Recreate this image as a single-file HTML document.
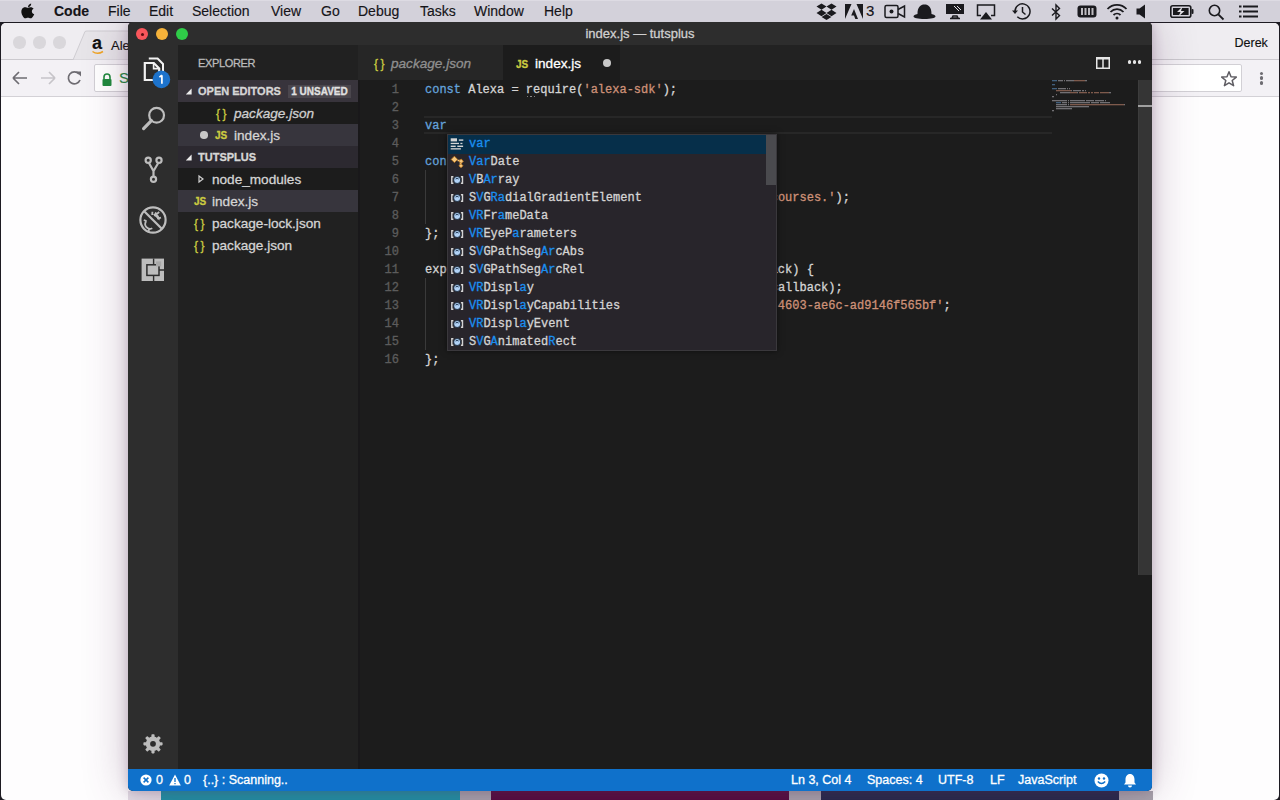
<!DOCTYPE html>
<html><head><meta charset="utf-8">
<style>
*{box-sizing:border-box;margin:0;padding:0}
html,body{width:1280px;height:800px;overflow:hidden;background:#1d1b22;font-family:"Liberation Sans",sans-serif}
.a{position:absolute}
svg{position:absolute;overflow:visible}
#chrome{left:1px;top:23px;width:1277.5px;height:777px;background:#fefdfe;border-radius:5px;overflow:hidden}
#menubar{left:0;top:0;width:1280px;height:22px;background:#d3d1da;z-index:5;border-top:1px solid #dddbe3}
.mi{position:absolute;top:2px;font-size:14px;color:#151418;line-height:16px;white-space:nowrap}
#vsc{left:128px;top:22px;width:1024px;height:769px;background:#1c1c1c;border-radius:5px;overflow:hidden;box-shadow:0 0 12px rgba(90,50,90,.28),0 0 45px rgba(90,50,90,.3)}
.ln{position:absolute;margin-top:0.8px;left:0;width:41px;text-align:right;font-size:12px;line-height:18px;color:#5c5c5c;font-family:"Liberation Mono",monospace}
.code{position:absolute;margin-top:0.5px;left:67px;font-size:12px;line-height:18px;color:#d4d4d4;white-space:pre;font-family:"Liberation Mono",monospace}
.kw{color:#64a2da}.st{color:#ce9178}
.row{position:absolute;left:0;width:180px;height:22px;font-size:13.6px;line-height:22px;color:#cccccc;white-space:nowrap}
.row span{position:absolute;top:0.6px}
.sw{position:absolute;left:0;width:319px;height:18px;font-size:12px;line-height:18px;color:#d4d4d4;white-space:pre;font-family:"Liberation Mono",monospace}
.sw .t{position:absolute;left:21px;top:0}
.h{color:#1b8ff0}
.sb{position:absolute;top:0;height:22px;line-height:22px;font-size:12.5px;color:#fff;white-space:nowrap}
#vsc span,#vsc div{-webkit-text-stroke:0.3px currentColor}
#menubar .mi,#chrome div{-webkit-text-stroke:0.15px currentColor}
</style></head><body>
<svg width="0" height="0" style="position:absolute;left:0;top:0"><defs>
<symbol id="vic" viewBox="0 0 20 18" overflow="visible">
  <path d="M5.4 5.7 H3.8 V12.3 H5.4 M12.9 5.7 H14.5 V12.3 H12.9" fill="none" stroke="#d4d4d4" stroke-width="1.4"/>
  <circle cx="9.15" cy="9" r="3.5" fill="#b2d2f6" stroke="#0e1e30" stroke-width="0.8"/>
  <path d="M7.6 8 Q9.1 6.8 10.6 8" fill="none" stroke="#1d3550" stroke-width="1"/>
</symbol>
</defs></svg>

<!-- ================= CHROME (behind) ================= -->
<div id="chrome" class="a">
  <div class="a" style="left:0;top:0;width:1278px;height:37px;background:#efedf1;border-bottom:1px solid #cbc9ce"></div>
  <div class="a" style="left:12px;top:13px;width:12.5px;height:12.5px;border-radius:50%;background:#d9d7db"></div>
  <div class="a" style="left:32px;top:13px;width:12.5px;height:12.5px;border-radius:50%;background:#d9d7db"></div>
  <div class="a" style="left:52px;top:13px;width:12.5px;height:12.5px;border-radius:50%;background:#d9d7db"></div>
  <svg style="left:0;top:0" width="200" height="37"><path d="M72 37 L84 8.5 Q85 8 86 8 L200 8 L200 37 Z" fill="#e7e5e9" stroke="#cfcdd2" stroke-width="1"/></svg>
  <div class="a" style="left:91px;top:10px;font-size:18px;font-weight:bold;color:#111;line-height:20px">a</div>
  <svg style="left:90px;top:27px" width="14" height="7"><path d="M1.5 1.5 Q6.5 5 12 1.5" fill="none" stroke="#f0a526" stroke-width="1.5"/></svg>
  <div class="a" style="left:110px;top:15px;font-size:13px;color:#111;line-height:15px">Alexa Skills</div>
  <div class="a" style="left:1233.5px;top:13px;font-size:12.5px;color:#111;line-height:15px">Derek</div>

  <div class="a" style="left:0;top:37px;width:1278px;height:37px;background:#f3f1f5;border-bottom:1px solid #d3d1d6"></div>
  <svg style="left:0;top:36px" width="100" height="37">
    <path d="M12 19 H26 M12 19 L18 13 M12 19 L18 25" fill="none" stroke="#6e6c72" stroke-width="1.7"/>
    <path d="M40 19 H54 M54 19 L48 13 M54 19 L48 25" fill="none" stroke="#c6c4c9" stroke-width="1.7"/>
    <path d="M78 15 A6 6 0 1 0 79 21" fill="none" stroke="#6e6c72" stroke-width="1.7"/>
    <path d="M75 12.5 L80 12.5 L80 17.5 Z" fill="#6e6c72"/>
  </svg>
  <div class="a" style="left:92.5px;top:41px;width:1148.5px;height:28px;background:#fff;border:1px solid #d2d0d5;border-radius:2px"></div>
  <svg style="left:99px;top:48.5px" width="14" height="16">
    <path d="M4 7 V5 A3 3 0 0 1 10 5 V7" fill="none" stroke="#1e8a3c" stroke-width="1.6"/>
    <rect x="2.5" y="7" width="9" height="7" rx="1" fill="#1e8a3c"/>
  </svg>
  <div class="a" style="left:118px;top:46px;font-size:15px;color:#1e8a3c;line-height:17px">Secure</div>
  <svg style="left:1217.5px;top:46px" width="20" height="20"><path d="M10 2.8 L12 7.8 L17.3 8.1 L13.2 11.5 L14.6 16.7 L10 13.8 L5.4 16.7 L6.8 11.5 L2.7 8.1 L8 7.8 Z" fill="none" stroke="#5f5d63" stroke-width="1.5" stroke-linejoin="round"/></svg>
  <div class="a" style="left:1258.5px;top:48.5px;width:3.5px;height:3.5px;border-radius:50%;background:#6e6c72"></div>
  <div class="a" style="left:1258.5px;top:53.3px;width:3.5px;height:3.5px;border-radius:50%;background:#6e6c72"></div>
  <div class="a" style="left:1258.5px;top:58.3px;width:3.5px;height:3.5px;border-radius:50%;background:#6e6c72"></div>
  <!-- page cards at bottom -->
  <div class="a" style="left:127px;top:768px;width:33px;height:12px;background:#e4dee6"></div>
  <div class="a" style="left:160px;top:768px;width:299px;height:12px;background:#1d93a6"></div>
  <div class="a" style="left:459px;top:768px;width:31px;height:12px;background:#a9a5ad"></div>
  <div class="a" style="left:490px;top:768px;width:298px;height:12px;background:#540a3d"></div>
  <div class="a" style="left:788px;top:768px;width:32px;height:12px;background:#a9a5ad"></div>
  <div class="a" style="left:820px;top:768px;width:298px;height:12px;background:#24284a"></div>
  <div class="a" style="left:1118px;top:768px;width:34px;height:12px;background:#a9a5ad"></div>
</div>

<!-- ================= MENU BAR ================= -->
<div id="menubar" class="a">
  <svg style="left:20.5px;top:1.5px" width="14.5" height="15.5" viewBox="0 0 16 17"><path d="M11.2 0.5 C11.3 1.6 10.9 2.6 10.3 3.3 C9.7 4.1 8.7 4.6 7.8 4.5 C7.7 3.5 8.2 2.5 8.8 1.8 C9.4 1.1 10.4 0.6 11.2 0.5 Z M14.6 12.3 C14.2 13.2 14 13.6 13.4 14.5 C12.7 15.6 11.7 16.9 10.5 16.9 C9.4 16.9 9.1 16.2 7.7 16.2 C6.2 16.2 5.9 16.9 4.8 16.9 C3.6 16.9 2.7 15.7 2 14.6 C0.1 11.7 -0.1 8.3 1.1 6.5 C1.9 5.2 3.2 4.5 4.5 4.5 C5.8 4.5 6.6 5.2 7.7 5.2 C8.7 5.2 9.3 4.5 10.8 4.5 C11.9 4.5 13.1 5.1 13.9 6.1 C11.1 7.7 11.5 11.6 14.6 12.3 Z" fill="#111"/></svg>
  <div class="mi" style="left:54px;font-weight:bold">Code</div>
  <div class="mi" style="left:108px">File</div>
  <div class="mi" style="left:149px">Edit</div>
  <div class="mi" style="left:192px">Selection</div>
  <div class="mi" style="left:271px">View</div>
  <div class="mi" style="left:321px">Go</div>
  <div class="mi" style="left:358px">Debug</div>
  <div class="mi" style="left:420px">Tasks</div>
  <div class="mi" style="left:474px">Window</div>
  <div class="mi" style="left:544px">Help</div>
  <!-- status icons -->
  <svg style="left:816px;top:2px" width="21" height="17" viewBox="0 0 21 17" fill="#1a1a1e">
    <path d="M5.5 0.5 L10.5 3.6 L5.5 6.8 L0.5 3.6 Z M15.5 0.5 L20.5 3.6 L15.5 6.8 L10.5 3.6 Z M5.5 6.8 L10.5 10 L5.5 13.2 L0.5 10 Z M15.5 6.8 L20.5 10 L15.5 13.2 L10.5 10 Z M5.6 14 L10.5 11 L15.4 14 L10.5 17 Z"/>
  </svg>
  <svg style="left:845px;top:3px" width="18" height="15" viewBox="0 0 18 15" fill="#1a1a1e">
    <path d="M0 0 H6.5 L0 15 Z M11.5 0 H18 V15 Z M9 5 L13 15 H10.3 L9 11.6 H6.2 L9 5 Z"/>
  </svg>
  <div class="mi" style="left:866px;top:2px;font-size:15px">3</div>
  <svg style="left:884px;top:3px" width="22" height="15" viewBox="0 0 22 15">
    <rect x="1" y="1.5" width="13" height="12" rx="1.5" fill="none" stroke="#1a1a1e" stroke-width="1.5"/>
    <circle cx="7.5" cy="7.5" r="2" fill="#1a1a1e"/>
    <path d="M14 5.5 L20.5 2 V13 L14 9.5" fill="none" stroke="#1a1a1e" stroke-width="1.5"/>
  </svg>
  <svg style="left:913px;top:3px" width="23" height="15" viewBox="0 0 23 15" fill="#1a1a1e">
    <path d="M4.5 10 C4.5 3 7.5 0.5 11.5 0.5 C15.5 0.5 18.5 3 18.5 10 C21 10.5 22.5 11.5 22.5 12.5 C22.5 14 18 15 11.5 15 C5 15 0.5 14 0.5 12.5 C0.5 11.5 2 10.5 4.5 10 Z"/>
  </svg>
  <svg style="left:945px;top:2px" width="20" height="17" viewBox="0 0 20 17">
    <path d="M1 1 H19 V11 H1 Z" fill="#1a1a1e"/>
    <path d="M8 13 L12 13 L13 15 H7 Z M5 15.5 H15" fill="none" stroke="#1a1a1e" stroke-width="1.5"/>
    <path d="M9 3 L14 8 M12 3 L16 7" stroke="#e2e0e5" stroke-width="1"/>
  </svg>
  <svg style="left:976px;top:3px" width="20" height="16" viewBox="0 0 20 16">
    <path d="M5 11.5 H1.5 V1 H18.5 V11.5 H15" fill="none" stroke="#1a1a1e" stroke-width="1.5"/>
    <path d="M10 8 L16 15.5 H4 Z" fill="#1a1a1e"/>
  </svg>
  <svg style="left:1011px;top:1px" width="21" height="19" viewBox="0 0 21 19">
    <path d="M4 9.5 A7.5 7.5 0 1 1 6.3 14.8" fill="none" stroke="#1a1a1e" stroke-width="1.5"/>
    <path d="M1 8.5 L4 12 L7 8.5 Z" fill="#1a1a1e"/>
    <path d="M11.5 5 V10 L14.5 12.5" fill="none" stroke="#1a1a1e" stroke-width="1.5"/>
  </svg>
  <svg style="left:1050px;top:3px" width="12" height="16" viewBox="0 0 12 16">
    <path d="M2 4.5 L9.5 11.5 L6 15 V1 L9.5 4.5 L2 11.5" fill="none" stroke="#1a1a1e" stroke-width="1.4"/>
  </svg>
  <svg style="left:1077px;top:4px" width="20" height="13" viewBox="0 0 20 13">
    <rect x="0.5" y="0.5" width="19" height="12" rx="3" fill="#1a1a1e"/>
    <rect x="4" y="3" width="2" height="7" fill="#bdbbc0"/><rect x="7.5" y="3" width="2" height="7" fill="#bdbbc0"/><rect x="11" y="3" width="2" height="7" fill="#bdbbc0"/><rect x="14.5" y="3" width="2" height="7" fill="#bdbbc0"/>
  </svg>
  <svg style="left:1106px;top:2px" width="22" height="17" viewBox="0 0 22 17">
    <path d="M1.5 6 A13 13 0 0 1 20.5 6 M4.5 9 A9 9 0 0 1 17.5 9 M7.5 12 A5 5 0 0 1 14.5 12" fill="none" stroke="#1a1a1e" stroke-width="1.8"/>
    <circle cx="11" cy="15" r="1.5" fill="#1a1a1e"/>
  </svg>
  <svg style="left:1136px;top:3px" width="10" height="15" viewBox="0 0 10 15">
    <path d="M0.5 4.5 H3.5 L9 0.5 V14.5 L3.5 10.5 H0.5 Z" fill="#1a1a1e"/>
  </svg>
  <svg style="left:1170px;top:4px" width="24" height="13" viewBox="0 0 24 13">
    <rect x="0.8" y="0.8" width="20" height="11.4" rx="2" fill="none" stroke="#1a1a1e" stroke-width="1.6"/>
    <rect x="21.5" y="4" width="2" height="5" rx="1" fill="#1a1a1e"/>
    <rect x="3" y="3" width="15.6" height="7" fill="#1a1a1e"/>
    <path d="M12.5 1.5 L7 7 H10.5 L8.5 11.5 L14.5 6 H11 Z" fill="#e2e0e5"/>
  </svg>
  <svg style="left:1208px;top:3px" width="17" height="17" viewBox="0 0 17 17">
    <circle cx="6.5" cy="6.5" r="5.2" fill="none" stroke="#1a1a1e" stroke-width="1.6"/>
    <path d="M10.3 10.3 L15.5 15.5" stroke="#1a1a1e" stroke-width="1.8"/>
  </svg>
  <svg style="left:1239px;top:4px" width="19" height="13" viewBox="0 0 19 13" fill="#1a1a1e">
    <rect x="0" y="0.5" width="2.5" height="2" /><rect x="4" y="0.5" width="15" height="2"/>
    <rect x="0" y="5.5" width="2.5" height="2" /><rect x="4" y="5.5" width="15" height="2"/>
    <rect x="0" y="10.5" width="2.5" height="2" /><rect x="4" y="10.5" width="15" height="2"/>
  </svg>
</div>

<!-- ================= VS CODE ================= -->
<div id="vsc" class="a">
  <!-- title bar -->
  <div class="a" style="left:0;top:0;width:1024px;height:23px;background:#2d2d2d"></div>
  <div class="a" style="left:8px;top:6px;width:12px;height:12px;border-radius:50%;background:#f9565b"></div>
  <div class="a" style="left:12.5px;top:10.5px;width:3px;height:3px;border-radius:50%;background:#5a0d10"></div>
  <div class="a" style="left:28px;top:6px;width:12px;height:12px;border-radius:50%;background:#f5b23a"></div>
  <div class="a" style="left:48px;top:6px;width:12px;height:12px;border-radius:50%;background:#2fcc48"></div>
  <div class="a" style="left:0;top:4px;width:1024px;text-align:center;font-size:13px;line-height:16px;color:#cfcfcf">index.js — tutsplus</div>

  <!-- activity bar -->
  <div class="a" style="left:0;top:23px;width:50px;height:724px;background:#2d2d2d"></div>
  <svg style="left:0;top:23px" width="50" height="724">
    <!-- files -->
    <path d="M20.8 13.6 H29.6 L35 19 V27" fill="none" stroke="#f2f2f2" stroke-width="2"/>
    <path d="M16.8 18 H25.8 L31.2 23.4 V35 H16.8 Z" fill="#2d2d2d" stroke="#f2f2f2" stroke-width="2.2"/>
    <path d="M25.6 18.8 V23.6 H30.6" fill="none" stroke="#f2f2f2" stroke-width="1.6"/>
    <circle cx="33.4" cy="34.4" r="8.8" fill="#1d73cc"/>
    <path d="M33.9 30.3 V38.7 M31.4 32.1 L33.9 30.3" fill="none" stroke="#fff" stroke-width="1.7"/>
    <!-- search -->
    <circle cx="28.6" cy="70.3" r="7.4" fill="none" stroke="#bdbdbd" stroke-width="2.2"/>
    <path d="M23.4 75.6 L15.6 83.6" stroke="#bdbdbd" stroke-width="3.2" stroke-linecap="round"/>
    <!-- git -->
    <g fill="none" stroke="#bdbdbd" stroke-width="2.2">
      <circle cx="20.2" cy="115.2" r="2.6"/><circle cx="31" cy="115.2" r="2.6"/><circle cx="25.5" cy="134.2" r="2.6"/>
      <path d="M20.8 117.8 L25.5 126 L30.4 117.8 M25.5 126 V131.5"/>
    </g>
    <!-- debug -->
    <g fill="none" stroke="#bdbdbd" stroke-width="2.2">
      <circle cx="25" cy="175" r="12.6"/>
      <path d="M16.2 166.2 L33.8 183.8"/>
    </g>
    <g fill="none" stroke="#bdbdbd" stroke-width="1.8">
      <path d="M18.2 176.2 A4.8 4.8 0 0 0 24.3 183.3"/>
      <path d="M18.6 176 L15.8 175.2 M21.2 183.6 L20.6 186.2"/>
      <path d="M26.6 171.2 L28 167.4 M29.2 173.6 L33 172.6 M24.2 170 L24.4 166.8 M28.4 169.4 L31.2 167"/>
    </g>
    <path d="M25 169.2 A5 5 0 0 1 31.4 175.6 Z" fill="#bdbdbd"/>
    <!-- extensions -->
    <rect x="13.6" y="213.6" width="22.4" height="22.4" fill="#bdbdbd"/>
    <path d="M25.6 213.6 V219.8 M25.6 230.4 V236 M31 225 H36" stroke="#2d2d2d" stroke-width="1.4"/>
    <rect x="18.9" y="219.8" width="12.1" height="10.6" fill="#bdbdbd" stroke="#2d2d2d" stroke-width="1.5"/>
    <rect x="28" y="216.4" width="5.2" height="5" fill="#a8a8a8"/>
    <!-- gear -->
    <g transform="translate(25,698.8)">
      <circle r="7.2" fill="#bdbdbd"/>
      <g fill="#bdbdbd">
        <rect x="-1.6" y="-9.6" width="3.2" height="19.2" rx="0.8"/>
        <rect x="-1.6" y="-9.6" width="3.2" height="19.2" rx="0.8" transform="rotate(45)"/>
        <rect x="-1.6" y="-9.6" width="3.2" height="19.2" rx="0.8" transform="rotate(90)"/>
        <rect x="-1.6" y="-9.6" width="3.2" height="19.2" rx="0.8" transform="rotate(135)"/>
      </g>
      <circle r="2.9" fill="#2d2d2d"/>
    </g>
  </svg>

  <!-- sidebar -->
  <div class="a" style="left:50px;top:23px;width:180px;height:724px;background:#212121">
    <div class="a" style="left:20px;top:12.3px;font-size:11px;line-height:12px;color:#bbbbbb;letter-spacing:-0.35px">EXPLORER</div>
    <div class="row" style="top:35px;background:#38343c">
      <svg style="left:7px;top:7.5px" width="8" height="8"><path d="M6.6 0.6 V6.4 H0.8 Z" fill="#ececec"/></svg>
      <span style="left:20px;top:-0.5px;font-size:11px;font-weight:bold;color:#d6d6d6">OPEN EDITORS</span>
      <span style="left:110px;top:5px;width:63px;height:13px;line-height:13px;background:#4a464d;color:#e0e0e0;font-size:10px;font-weight:bold;text-align:center">1 UNSAVED</span>
    </div>
    <div class="row" style="top:57px;background:#1c1c1c">
      <span style="left:38px;color:#cbcb41;font-size:12px;letter-spacing:2.5px">{}</span>
      <span style="left:56px;font-style:italic;color:#cfcfcf">package.json</span>
    </div>
    <div class="row" style="top:79px;background:#37353d">
      <div class="a" style="left:22px;top:7.2px;width:7.6px;height:7.6px;border-radius:50%;background:#c8c8c8"></div>
      <span style="left:37px;color:#cbcb41;font-size:10px;font-weight:bold">JS</span>
      <span style="left:56px;color:#d4d4d4">index.js</span>
    </div>
    <div class="row" style="top:101px;background:#2c2930">
      <svg style="left:7px;top:7.5px" width="8" height="8"><path d="M6.6 0.6 V6.4 H0.8 Z" fill="#ececec"/></svg>
      <span style="left:20px;top:-0.5px;font-size:11px;font-weight:bold;color:#d6d6d6">TUTSPLUS</span>
    </div>
    <div class="row" style="top:123px;background:#1c1c1c">
      <svg style="left:20px;top:7px" width="6" height="8"><path d="M1 1 L5 4 L1 7 Z" fill="none" stroke="#d0d0d0" stroke-width="1.2"/></svg>
      <span style="left:34px;color:#d4d4d4">node_modules</span>
    </div>
    <div class="row" style="top:145px;background:#37353d">
      <span style="left:16px;color:#cbcb41;font-size:10px;font-weight:bold">JS</span>
      <span style="left:34px;color:#d4d4d4">index.js</span>
    </div>
    <div class="row" style="top:167px">
      <span style="left:16px;color:#cbcb41;font-size:12px;letter-spacing:2.5px">{}</span>
      <span style="left:34px;color:#d4d4d4">package-lock.json</span>
    </div>
    <div class="row" style="top:189px">
      <span style="left:16px;color:#cbcb41;font-size:12px;letter-spacing:2.5px">{}</span>
      <span style="left:34px;color:#d4d4d4">package.json</span>
    </div>
  </div>

  <!-- tab bar -->
  <div class="a" style="left:230px;top:23px;width:794px;height:35px;background:#222222"></div>
  <div class="a" style="left:230px;top:23px;width:145px;height:35px;background:#262626">
    <span class="a" style="left:16px;top:11.5px;color:#cbcb41;font-size:12px;line-height:15px;letter-spacing:2.5px">{}</span>
    <span class="a" style="left:33px;top:10.5px;font-style:italic;color:#8f8f8f;font-size:13.6px;line-height:16px">package.json</span>
  </div>
  <div class="a" style="left:375px;top:23px;width:117px;height:35px;background:#1c1c1c">
    <span class="a" style="left:13px;top:12.5px;color:#cbcb41;font-size:10px;font-weight:bold;line-height:13px">JS</span>
    <span class="a" style="left:32px;top:10.5px;color:#ffffff;font-size:13.6px;line-height:16px">index.js</span>
    <div class="a" style="left:100px;top:36px;width:8px;height:8px;border-radius:50%;background:#c8c8c8;top:14px"></div>
  </div>
  <!-- split + more -->
  <svg style="left:966px;top:34px" width="20" height="16">
    <rect x="2.75" y="1.75" width="12.5" height="10.5" fill="none" stroke="#e6e6e6" stroke-width="1.5"/>
    <rect x="2" y="1" width="14" height="2.5" fill="#e6e6e6"/>
    <path d="M9 2 V12" stroke="#e6e6e6" stroke-width="1.5"/>
  </svg>
  <div class="a" style="left:999.5px;top:38.4px;width:3.5px;height:3.5px;border-radius:50%;background:#e6e6e6"></div>
  <div class="a" style="left:1004.5px;top:38.4px;width:3.5px;height:3.5px;border-radius:50%;background:#e6e6e6"></div>
  <div class="a" style="left:1009.5px;top:38.4px;width:3.5px;height:3.5px;border-radius:50%;background:#e6e6e6"></div>

  <div class="a" style="left:230px;top:58px;width:2px;height:689px;background:#19181a;z-index:1"></div>
  <!-- editor -->
  <div class="a" style="left:230px;top:58px;width:794px;height:689px;background:#1c1c1c">
    <!-- current line borders -->
    <div class="a" style="left:66px;top:36px;width:628px;height:18px;border-top:2px solid #272727;border-bottom:2px solid #272727"></div>
  </div>
  <div class="a" style="left:230px;top:58px;width:794px;height:689px">
    <div class="ln" style="top:0">1</div>
    <div class="ln" style="top:18px">2</div>
    <div class="ln" style="top:36px">3</div>
    <div class="ln" style="top:54px">4</div>
    <div class="ln" style="top:72px">5</div>
    <div class="ln" style="top:90px">6</div>
    <div class="ln" style="top:108px">7</div>
    <div class="ln" style="top:126px">8</div>
    <div class="ln" style="top:144px">9</div>
    <div class="ln" style="top:162px">10</div>
    <div class="ln" style="top:180px">11</div>
    <div class="ln" style="top:198px">12</div>
    <div class="ln" style="top:216px">13</div>
    <div class="ln" style="top:234px">14</div>
    <div class="ln" style="top:252px">15</div>
    <div class="ln" style="top:270px">16</div>
  </div>
  <div class="a" style="left:-230px;top:0;width:0;height:0"></div>
  <div class="a" style="left:230px;top:58px;width:794px;height:689px;overflow:hidden">
    <!-- indent guides -->
    <div class="a" style="left:67px;top:90px;width:1px;height:54px;background:#3a3a3a"></div>
    <div class="a" style="left:67px;top:198px;width:1px;height:72px;background:#3a3a3a"></div>
    <div class="code" style="top:0"><span class="kw">const</span> Alexa = require(<span class="st">'alexa-sdk'</span>);</div>
    <div class="a" style="left:168.5px;top:15.6px;width:1.8px;height:1.8px;border-radius:50%;background:#9a9a9a"></div><div class="a" style="left:172px;top:15.6px;width:1.8px;height:1.8px;border-radius:50%;background:#9a9a9a"></div><div class="a" style="left:175.5px;top:15.6px;width:1.8px;height:1.8px;border-radius:50%;background:#9a9a9a"></div>
    <div class="code" style="top:36px"><span class="kw">var</span></div>
    <div class="code" style="top:72px"><span class="kw">const</span> handlers = {</div>
    <div class="code" style="top:90px">    <span class="st">'LaunchRequest'</span>: function () {</div>
    <div class="code" style="top:108px">        this.emit(<span class="st">':tell'</span>, <span class="st">'Welcome to my Tuts+ courses.'</span>);</div>
    <div class="code" style="top:126px">    }</div>
    <div class="code" style="top:144px">};</div>
    <div class="code" style="top:180px">exports.handler = function(event, context, callback) {</div>
    <div class="code" style="top:198px">    <span class="kw">const</span> alexa = Alexa.handler(event, context, callback);</div>
    <div class="code" style="top:216px">    alexa.appId = <span class="st">'amzn1.ask.skill.1a2b3c4d-5e6f-4603-ae6c-ad9146f565bf'</span>;</div>
    <div class="code" style="top:234px">    alexa.registerHandlers(handlers);</div>
    <div class="code" style="top:252px">    alexa.execute();</div>
    <div class="code" style="top:270px">};</div>

    <!-- minimap -->
    <svg style="left:694px;top:0" width="90" height="40" id="minimap"><rect x="0" y="0" width="5" height="1.3" fill="#42607e"/><rect x="6" y="0" width="5" height="1.3" fill="#727074"/><rect x="12" y="0" width="1" height="1.3" fill="#727074"/><rect x="14" y="0" width="8" height="1.3" fill="#727074"/><rect x="22" y="0" width="11" height="1.3" fill="#7e5a4c"/><rect x="33" y="0" width="2" height="1.3" fill="#727074"/><rect x="0" y="4" width="3" height="1.3" fill="#42607e"/><rect x="0" y="8" width="5" height="1.3" fill="#42607e"/><rect x="6" y="8" width="8" height="1.3" fill="#727074"/><rect x="15" y="8" width="1" height="1.3" fill="#727074"/><rect x="17" y="8" width="1" height="1.3" fill="#727074"/><rect x="4" y="10" width="15" height="1.3" fill="#7e5a4c"/><rect x="19" y="10" width="1" height="1.3" fill="#727074"/><rect x="21" y="10" width="8" height="1.3" fill="#727074"/><rect x="30" y="10" width="2" height="1.3" fill="#727074"/><rect x="33" y="10" width="1" height="1.3" fill="#727074"/><rect x="8" y="12" width="10" height="1.3" fill="#727074"/><rect x="18" y="12" width="7" height="1.3" fill="#7e5a4c"/><rect x="25" y="12" width="1" height="1.3" fill="#727074"/><rect x="27" y="12" width="8" height="1.3" fill="#7e5a4c"/><rect x="36" y="12" width="2" height="1.3" fill="#7e5a4c"/><rect x="39" y="12" width="2" height="1.3" fill="#7e5a4c"/><rect x="42" y="12" width="5" height="1.3" fill="#7e5a4c"/><rect x="48" y="12" width="9" height="1.3" fill="#7e5a4c"/><rect x="57" y="12" width="2" height="1.3" fill="#727074"/><rect x="4" y="14" width="1" height="1.3" fill="#727074"/><rect x="0" y="16" width="2" height="1.3" fill="#727074"/><rect x="0" y="20" width="15" height="1.3" fill="#727074"/><rect x="16" y="20" width="1" height="1.3" fill="#727074"/><rect x="18" y="20" width="15" height="1.3" fill="#727074"/><rect x="34" y="20" width="8" height="1.3" fill="#727074"/><rect x="43" y="20" width="9" height="1.3" fill="#727074"/><rect x="53" y="20" width="1" height="1.3" fill="#727074"/><rect x="4" y="22" width="5" height="1.3" fill="#42607e"/><rect x="10" y="22" width="5" height="1.3" fill="#727074"/><rect x="16" y="22" width="1" height="1.3" fill="#727074"/><rect x="18" y="22" width="20" height="1.3" fill="#727074"/><rect x="39" y="22" width="8" height="1.3" fill="#727074"/><rect x="48" y="22" width="10" height="1.3" fill="#727074"/><rect x="4" y="24" width="11" height="1.3" fill="#727074"/><rect x="16" y="24" width="1" height="1.3" fill="#727074"/><rect x="18" y="24" width="54" height="1.3" fill="#7e5a4c"/><rect x="72" y="24" width="1" height="1.3" fill="#727074"/><rect x="4" y="26" width="33" height="1.3" fill="#727074"/><rect x="4" y="28" width="16" height="1.3" fill="#727074"/><rect x="0" y="30" width="2" height="1.3" fill="#727074"/></svg>
    <!-- scrollbar -->
    <div class="a" style="left:780px;top:0;width:14px;height:495px;background:#353535;border-left:1px solid #3c3c3c"></div>
    <div class="a" style="left:780px;top:25px;width:14px;height:2px;background:#a0a0a0"></div>
  </div>

  <!-- suggest widget -->
  <div class="a" style="left:319px;top:112px;width:330px;height:217px;background:#28252b;border:1px solid #3a383c;box-shadow:0 0 6px rgba(0,0,0,.55)">
    <div class="a" style="left:0;top:0;width:319px;height:19px;background:#062f4a"></div>
    <div class="a" style="left:318px;top:0;width:10px;height:50px;background:#4a4a4e"></div>
    <div class="sw" style="top:0">
      <svg style="left:0;top:0" width="20" height="18"><g fill="#d6d6d6"><rect x="2.7" y="3.3" width="6.3" height="3.1"/><rect x="10.8" y="4.4" width="4.5" height="1.4"/><rect x="2.7" y="7.8" width="8.3" height="1.3"/><rect x="12.4" y="7.8" width="2" height="1.3"/><rect x="2.7" y="10.6" width="5" height="1.4"/><rect x="9.3" y="10.6" width="5.8" height="1.4"/><rect x="2.7" y="13.2" width="10.2" height="1.3"/></g></svg>
      <span class="t"><span class="h">var</span></span></div>
    <div class="sw" style="top:18px">
      <svg style="left:0;top:0" width="20" height="18"><g fill="#f5c77e" stroke="#c07a1e" stroke-width="0.8"><path d="M9.5 7.5 H12.5 V13.5" fill="none" stroke="#f5c77e" stroke-width="1.6"/><path d="M3.2 6.4 L6.4 3.2 L9.6 6.4 L6.4 9.6 Z"/><path d="M11 8.2 L13.2 6 L15.4 8.2 L13.2 10.4 Z"/><path d="M11 12.8 L13 10.8 L15 12.8 L13 14.8 Z"/></g></svg>
      <span class="t"><span class="h">Var</span>Date</span></div>
    <div class="sw" style="top:36px"><svg style="left:0;top:0" width="20" height="18"><use href="#vic"/></svg><span class="t"><span class="h">V</span>B<span class="h">Ar</span>ray</span></div>
    <div class="sw" style="top:54px"><svg style="left:0;top:0" width="20" height="18"><use href="#vic"/></svg><span class="t">S<span class="h">V</span>G<span class="h">Ra</span>dialGradientElement</span></div>
    <div class="sw" style="top:72px"><svg style="left:0;top:0" width="20" height="18"><use href="#vic"/></svg><span class="t"><span class="h">VR</span>Fr<span class="h">a</span>meData</span></div>
    <div class="sw" style="top:90px"><svg style="left:0;top:0" width="20" height="18"><use href="#vic"/></svg><span class="t"><span class="h">VR</span>EyeP<span class="h">a</span>rameters</span></div>
    <div class="sw" style="top:108px"><svg style="left:0;top:0" width="20" height="18"><use href="#vic"/></svg><span class="t">S<span class="h">V</span>GPathSeg<span class="h">Ar</span>cAbs</span></div>
    <div class="sw" style="top:126px"><svg style="left:0;top:0" width="20" height="18"><use href="#vic"/></svg><span class="t">S<span class="h">V</span>GPathSeg<span class="h">Ar</span>cRel</span></div>
    <div class="sw" style="top:144px"><svg style="left:0;top:0" width="20" height="18"><use href="#vic"/></svg><span class="t"><span class="h">VR</span>Displ<span class="h">a</span>y</span></div>
    <div class="sw" style="top:162px"><svg style="left:0;top:0" width="20" height="18"><use href="#vic"/></svg><span class="t"><span class="h">VR</span>Displ<span class="h">a</span>yCapabilities</span></div>
    <div class="sw" style="top:180px"><svg style="left:0;top:0" width="20" height="18"><use href="#vic"/></svg><span class="t"><span class="h">VR</span>Displ<span class="h">a</span>yEvent</span></div>
    <div class="sw" style="top:198px"><svg style="left:0;top:0" width="20" height="18"><use href="#vic"/></svg><span class="t">S<span class="h">V</span>G<span class="h">A</span>nimated<span class="h">R</span>ect</span></div>
  </div>

  <!-- status bar -->
  <div class="a" style="left:0;top:747px;width:1024px;height:22px;background:#0f71cb">
    <svg style="left:12px;top:5px" width="12" height="12"><circle cx="6" cy="6" r="5.6" fill="#fff"/><path d="M3.6 3.6 L8.4 8.4 M8.4 3.6 L3.6 8.4" stroke="#0f71cb" stroke-width="1.5"/></svg>
    <span class="sb" style="left:28px">0</span>
    <svg style="left:41px;top:5px" width="12" height="12"><path d="M6 0.5 L11.8 11.5 H0.2 Z" fill="#fff"/><path d="M6 4 V8 M6 9 V10.3" stroke="#0f71cb" stroke-width="1.3"/></svg>
    <span class="sb" style="left:56px">0</span>
    <span class="sb" style="left:75px">{..} : Scanning..</span>
    <span class="sb" style="left:663px">Ln 3, Col 4</span>
    <span class="sb" style="left:739px">Spaces: 4</span>
    <span class="sb" style="left:810px">UTF-8</span>
    <span class="sb" style="left:862px">LF</span>
    <span class="sb" style="left:890px">JavaScript</span>
    <svg style="left:966px;top:4px" width="15" height="15"><circle cx="7.5" cy="7.5" r="7" fill="#fff"/><circle cx="5" cy="5.5" r="1.2" fill="#0f71cb"/><circle cx="10" cy="5.5" r="1.2" fill="#0f71cb"/><path d="M3.8 8.5 Q7.5 12.5 11.2 8.5" fill="none" stroke="#0f71cb" stroke-width="1.4"/></svg>
    <svg style="left:995px;top:4px" width="14" height="15"><path d="M7 1 C10 1 11.5 3.5 11.5 6.5 V9.5 L13 11.5 H1 L2.5 9.5 V6.5 C2.5 3.5 4 1 7 1 Z" fill="#fff"/><path d="M5 12.5 A2 2 0 0 0 9 12.5 Z" fill="#fff"/></svg>
  </div>
</div>
<style>
.ic{position:absolute;left:3px;top:5px;width:13px;height:9px;border:1.5px solid #c8c8c8;border-top:none;border-bottom:none;border-radius:1px}
.ic::after{content:"";position:absolute;left:2.5px;top:0.5px;width:5px;height:5px;border-radius:50%;background:#8fb8e6;border:1px solid #c8c8c8}
</style>
</body></html>
